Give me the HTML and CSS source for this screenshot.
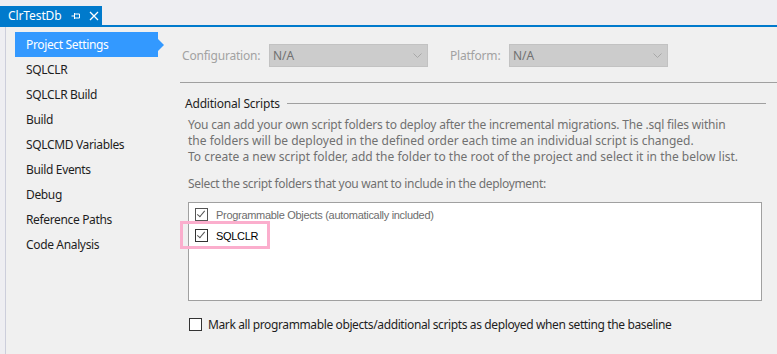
FILE: index.html
```html
<!DOCTYPE html>
<html>
<head>
<meta charset="utf-8">
<link rel="stylesheet" href="styles.css">
</head>
<body>
<div class="tabbar">
  <div class="tab">
    <span class="tab-title">ClrTestDb</span>
    <svg class="pin" width="10" height="10" viewBox="0 0 10 10"><path d="M0.5 5h3M3.5 2v6M3.5 3h5v4h-5M8.5 3v4" fill="none" stroke="#fff" stroke-width="1"/></svg>
    <svg class="close" width="10" height="10" viewBox="0 0 10 10"><path d="M1 1l8 8M9 1l-8 8" stroke="#fff" stroke-width="1.3"/></svg>
  </div>
</div>
<div class="tabline"></div>
<div class="main">
  <nav class="nav">
    <div class="nav-item active">Project Settings</div>
    <div class="nav-item">SQLCLR</div>
    <div class="nav-item">SQLCLR Build</div>
    <div class="nav-item">Build</div>
    <div class="nav-item">SQLCMD Variables</div>
    <div class="nav-item">Build Events</div>
    <div class="nav-item">Debug</div>
    <div class="nav-item">Reference Paths</div>
    <div class="nav-item">Code Analysis</div>
  </nav>
  <section class="content">
    <div class="toprow">
      <span class="lbl lbl-config">Configuration:</span>
      <div class="combo"><span>N/A</span><svg width="9" height="5" viewBox="0 0 9 5"><path d="M0.5 0.5l4 4 4-4" fill="none" stroke="#a8a8a8" stroke-width="1"/></svg></div>
      <span class="lbl lbl-plat">Platform:</span>
      <div class="combo"><span>N/A</span><svg width="9" height="5" viewBox="0 0 9 5"><path d="M0.5 0.5l4 4 4-4" fill="none" stroke="#a8a8a8" stroke-width="1"/></svg></div>
    </div>
    <div class="hr"></div>
    <div class="group-head"><span>Additional Scripts</span><div class="group-line"></div></div>
    <div class="desc">
      <p><span class="l1">You can add your own script folders to deploy after the incremental migrations. The .sql files within</span><br>the folders will be deployed in the defined order each time an individual script is changed.<br>To create a new script folder, add the folder to the root of the project and select it in the below list.</p>
      <p class="select">Select the script folders that you want to include in the deployment:</p>
    </div>
    <div class="listbox">
      <div class="item muted"><span class="cb checked"></span><span>Programmable Objects (automatically included)</span></div>
      <div class="item"><span class="cb checked"></span><span>SQLCLR</span></div>
      <div class="highlight"></div>
    </div>
    <div class="baseline"><span class="cb"></span><span class="baseline-text">Mark all programmable objects/additional scripts as deployed when setting the baseline</span></div>
  </section>
</div>
</body>
</html>
```

FILE: styles.css
```css
html, body {
  margin: 0;
  padding: 0;
}
body {
  width: 777px;
  height: 354px;
  overflow: hidden;
  background: #eeeef2;
  font-family: "Noto Sans", "Liberation Sans", Arial, sans-serif;
  font-size: 12px;
  color: #1e1e1e;
}
.tabbar {
  height: 25px;
  padding-top: 6px;
  box-sizing: border-box;
  display: flex;
}
.tab {
  background: #007acc;
  width: 102px;
  height: 19px;
  display: flex;
  align-items: center;
  color: #fff;
  box-sizing: border-box;
  padding-left: 8px;
}
.tab-title {
  font-size: 12px;
  letter-spacing: -0.1px;
  margin-right: 9px;
}
.pin {
  margin-right: 8px;
}
.tabline {
  height: 2px;
  background: #007acc;
}
.main {
  margin-left: 5px;
  border-left: 1px solid #cccedb;
  background: #f0f0f0;
  height: 327px;
  display: flex;
}
.nav {
  width: 174px;
  flex: none;
  padding-top: 5px;
  padding-left: 9px;
  box-sizing: border-box;
}
.nav-item {
  width: 143px;
  height: 25px;
  line-height: 25px;
  padding-left: 11px;
  box-sizing: border-box;
  color: #1e1e1e;
  letter-spacing: -0.35px;
  position: relative;
}
.nav-item.active {
  background: #3399ff;
  color: #fff;
}
.nav-item.active::after {
  content: "";
  position: absolute;
  left: 143px;
  top: 7px;
  border-top: 6px solid transparent;
  border-bottom: 6px solid transparent;
  border-left: 6px solid #3399ff;
}
.content {
  flex: 1;
  padding-top: 17px;
}
.toprow {
  display: flex;
  align-items: center;
  padding-left: 2px;
  height: 23px;
}
.lbl {
  color: #a2a2a2;
  letter-spacing: -0.2px;
}
.lbl-config {
  width: 87px;
}
.lbl-plat {
  width: 59px;
  margin-left: 22px;
}
.combo {
  width: 159px;
  height: 23px;
  box-sizing: border-box;
  background: #cccccc;
  border: 1px solid #c2c2c2;
  display: flex;
  align-items: center;
  justify-content: space-between;
  padding: 0 5px 0 3px;
  color: #717171;
}
.hr {
  margin-top: 15px;
  height: 1px;
  background: #a0a0a0;
}
.group-head {
  margin-top: 12px;
  margin-left: 5px;
  margin-right: 11px;
  height: 16px;
  display: flex;
  align-items: center;
  color: #1e1e1e;
  letter-spacing: -0.2px;
}
.group-line {
  flex: 1;
  height: 1px;
  background: #a0a0a0;
  margin-left: 7px;
}
.desc {
  margin-left: 8px;
  margin-top: 6px;
  color: #717171;
  line-height: 16px;
}
.desc p {
  margin: 0;
}
.desc .l1 {
  letter-spacing: -0.19px;
}
.desc .select {
  margin-top: 11px;
  letter-spacing: -0.33px;
}
.listbox {
  position: relative;
  margin-top: 10px;
  margin-left: 8px;
  width: 574px;
  height: 99px;
  box-sizing: border-box;
  border: 1px solid #a0a0a0;
  background: #fff;
  padding: 1px 0 0 6px;
  font-family: "Liberation Sans", Arial, sans-serif;
  font-size: 11px;
  letter-spacing: -0.3px;
}
.item {
  height: 21px;
  display: flex;
  align-items: center;
  gap: 8px;
  color: #000000;
}
.item.muted {
  color: #6d6d6d;
}
.cb {
  width: 13px;
  height: 13px;
  box-sizing: border-box;
  border: 1px solid #333333;
  background: #fff;
  flex: none;
  position: relative;
}
.item.muted .cb {
  border-color: #555555;
}
.cb.checked::after {
  content: "";
  position: absolute;
  left: 3px;
  top: 0px;
  width: 3px;
  height: 7px;
  border-right: 1.4px solid #555;
  border-bottom: 1.4px solid #555;
  transform: rotate(40deg);
}
.highlight {
  position: absolute;
  left: -9px;
  top: 18px;
  width: 90px;
  height: 28px;
  box-sizing: border-box;
  border: 3px solid #fbaecd;
}
.baseline {
  margin-top: 15px;
  margin-left: 9px;
  display: flex;
  align-items: center;
  gap: 6px;
  color: #1e1e1e;
}
.baseline-text {
  letter-spacing: -0.38px;
}
```
